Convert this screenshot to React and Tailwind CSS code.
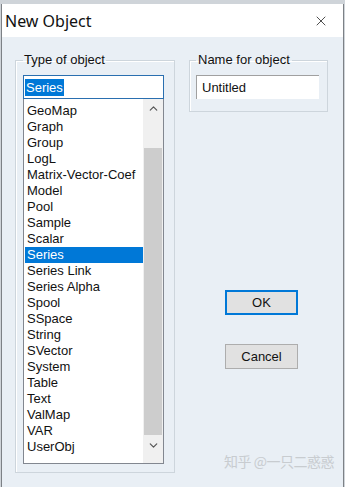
import { X, ChevronUp, ChevronDown } from 'lucide-react';

const items = [
  'GeoMap', 'Graph', 'Group', 'LogL', 'Matrix-Vector-Coef', 'Model', 'Pool', 'Sample', 'Scalar',
  'Series', 'Series Link', 'Series Alpha', 'Spool', 'SSpace', 'String', 'SVector', 'System',
  'Table', 'Text', 'ValMap', 'VAR', 'UserObj',
];

const font = { fontFamily: 'Tahoma, "Liberation Sans", Arial, sans-serif' };

export default function App() {
  return (
    <div className="w-[345px] h-[487px] bg-[#cfd4d9] pt-[4px] pl-[1px] pr-[1px] overflow-hidden" style={font}>
      <div className="h-full flex flex-col border-l border-r border-[#7d8186]">
        {/* Title bar */}
        <div className="h-[33px] bg-white flex items-center justify-between pl-[3px] pr-[14px] shrink-0">
          <span className="text-[16px] text-[#111] mt-[1px]" style={{ fontFamily: '"Noto Sans", "Open Sans", sans-serif' }}>New Object</span>
          <X className="w-[16px] h-[16px] text-[#222]" strokeWidth={1.2} />
        </div>

        {/* Body */}
        <div className="flex-1 bg-[#e9eff5] flex pl-[13px] pt-[15px] text-[13px] text-[#111]">
          <fieldset className="w-[160px] h-[421px] border border-[#cdd5dc] shadow-[inset_1px_1px_0_#fff] pl-[7px] pr-[10px]">
            <legend className="px-[1px] text-[13px] leading-[16px]">Type of object</legend>
            <div className="mt-[7px] h-[24px] border border-[#2a6fb0] bg-white flex items-center px-[1px]">
              <span className="bg-[#0078d7] text-white leading-[17px] px-[1px]">Series</span>
            </div>
            <div className="h-[365px] border border-[#828790] border-t-0 bg-white flex">
              <div className="flex-1 pt-[4px] pl-[1px]">
                {items.map((it) => (
                  <div
                    key={it}
                    className={`h-[16px] leading-[16px] pl-[2px] ${it === 'Series' ? 'bg-[#0078d7] text-white' : ''}`}
                  >
                    {it}
                  </div>
                ))}
              </div>
              <div className="w-[20px] bg-[#f0f0f0] flex flex-col items-center">
                <div className="h-[18px] flex items-center justify-center">
                  <ChevronUp className="w-[13px] h-[13px] text-[#555]" strokeWidth={2.2} />
                </div>
                <div className="mt-[31px] h-[287px] w-[18px] bg-[#cdcdcd]" />
                <div className="h-[20px] flex items-center justify-center">
                  <ChevronDown className="w-[13px] h-[13px] text-[#555]" strokeWidth={2.2} />
                </div>
              </div>
            </div>
          </fieldset>

          <div className="ml-[14px] flex flex-col">
            <fieldset className="w-[139px] h-[60px] border border-[#cdd5dc] shadow-[inset_1px_1px_0_#fff] px-[6px]">
              <legend className="px-[2px] text-[13px] leading-[16px]">Name for object</legend>
              <div className="mt-[7px] h-[24px] w-[123px] bg-white border-t border-l border-[#a0a0a0] flex items-center pl-[5px]">
                Untitled
              </div>
            </fieldset>

            <button className="ml-[36px] mt-[178px] w-[73px] h-[25px] bg-[#e1e1e1] border-2 border-[#0078d7] text-[13px]">
              OK
            </button>
            <button className="ml-[36px] mt-[29px] w-[73px] h-[25px] bg-[#e1e1e1] border border-[#adadad] text-[13px]">
              Cancel
            </button>

            <div className="mt-[82px] ml-[35px] text-[14px] text-[#c8ccd0] tracking-[-0.5px]" style={{ fontFamily: '"Noto Sans CJK SC", sans-serif' }}>
              知乎 @一只二惑惑
            </div>
          </div>
        </div>
      </div>
    </div>
  );
}
